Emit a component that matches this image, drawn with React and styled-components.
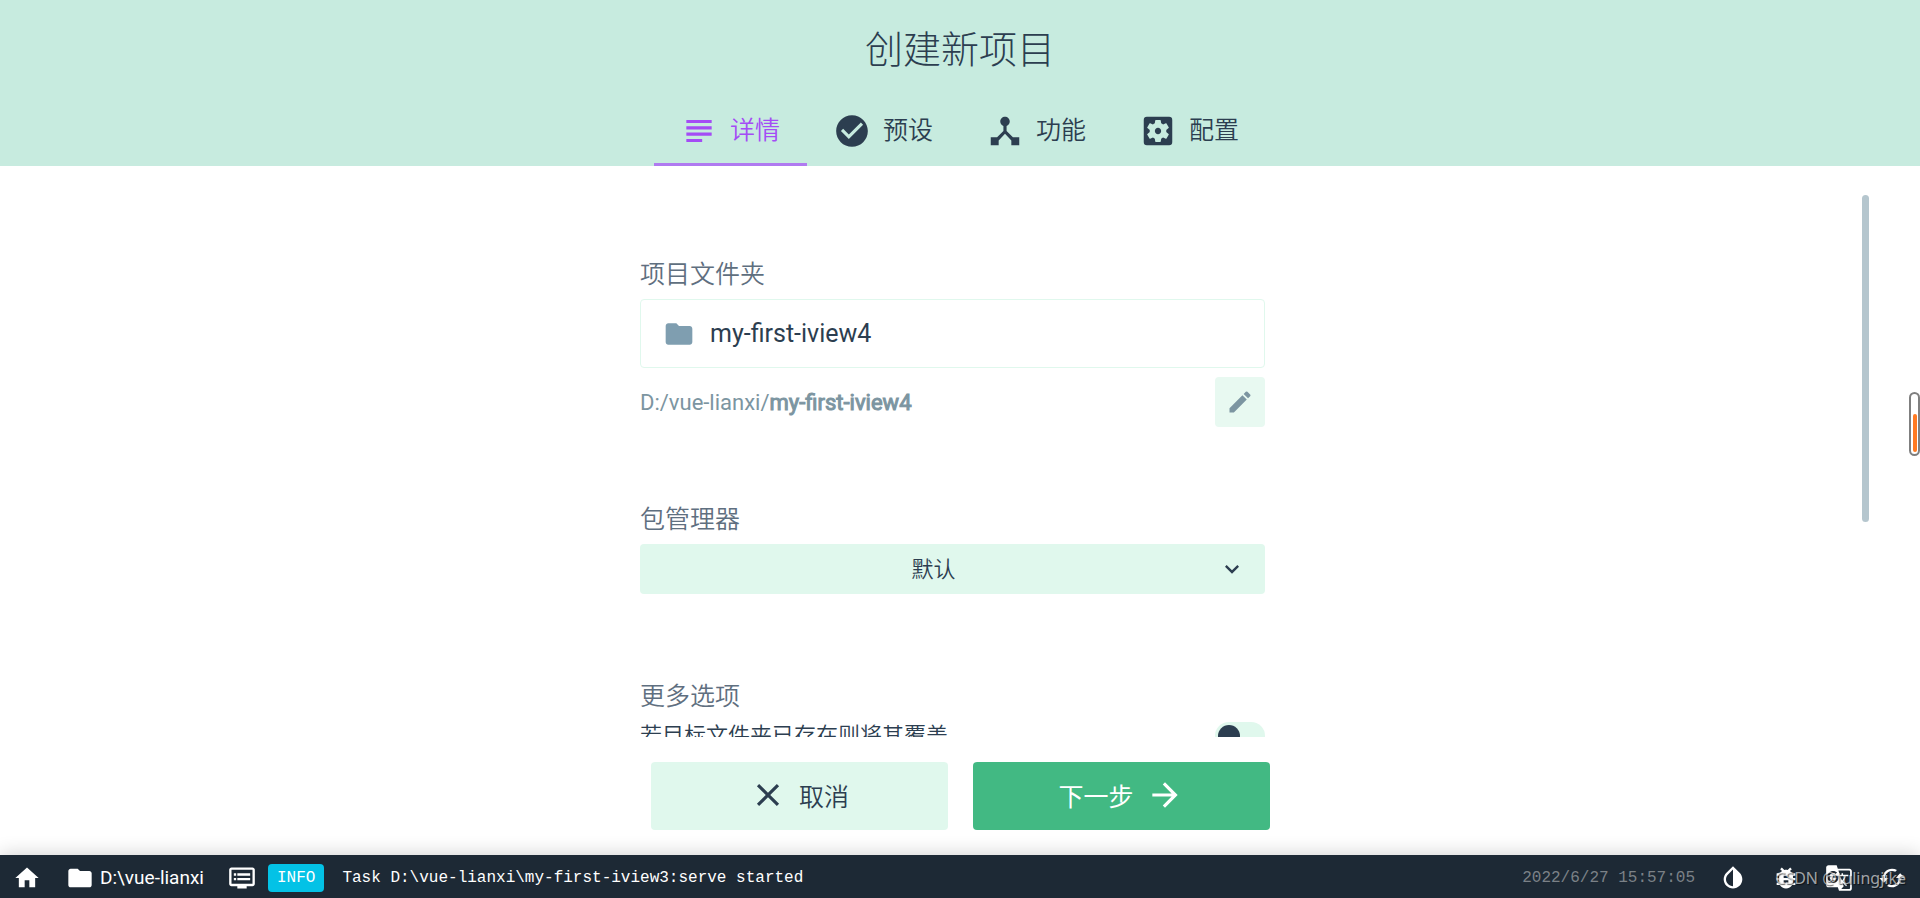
import React, { useState } from 'react';
import styled, { createGlobalStyle, css } from 'styled-components';
import {
  MdSubject,
  MdCheckCircle,
  MdDeviceHub,
  MdSettingsApplications,
  MdFolder,
  MdEdit,
  MdExpandMore,
  MdClose,
  MdArrowForward,
  MdHome,
  MdDvr,
  MdInvertColors,
  MdBugReport,
  MdGTranslate,
  MdCached,
} from 'react-icons/md';

const GlobalStyle = createGlobalStyle`
  *, *::before, *::after {
    box-sizing: border-box;
  }

  body {
    margin: 0;
    background: #fff;
    color: #2c3e50;
    font-family: Roboto, 'Noto Sans CJK SC', sans-serif;
    font-size: 22px;
  }

  button, input, select {
    font-family: inherit;
    color: inherit;
  }
`;

const Page = styled.div`
  position: relative;
  display: flex;
  flex-direction: column;
  height: 100vh;
  overflow: hidden;
`;

const Header = styled.header`
  display: flex;
  flex-direction: column;
  align-items: center;
  background: #c7ebdf;
`;

const Title = styled.h1`
  margin: 0;
  padding-top: 4px;
  line-height: 92px;
  font-size: 38px;
  font-weight: 300;
`;

const Tabs = styled.nav`
  display: flex;
`;

const Tab = styled.button`
  display: flex;
  align-items: center;
  gap: 12px;
  height: 70px;
  padding: 0 27px 0 26px;
  border: 0;
  background: none;
  line-height: 36px;
  font-size: 25px;
  font-weight: 350;
  cursor: pointer;

  svg {
    width: 38px;
    height: 38px;
  }

  ${({ $active }) =>
    $active &&
    css`
      color: #a44cf5;
      box-shadow: inset 0 -3px #b07af0;
    `}
`;

const Main = styled.main`
  position: relative;
  flex: 1;
  min-height: 0;
  overflow: hidden;
  padding: 86px 15px 0 0;
`;

const ScrollThumb = styled.div`
  position: absolute;
  top: 29px;
  right: 51px;
  width: 7px;
  height: 327px;
  border-radius: 4px;
  background: #b5c6ce;
`;

const Form = styled.form`
  display: flex;
  flex-direction: column;
  width: 625px;
  max-width: 100%;
  margin: 0 auto;
`;

const Field = styled.div`
  margin-bottom: ${({ $gap }) => $gap}px;
`;

const Label = styled.label`
  display: block;
  margin-bottom: 2px;
  line-height: 45px;
  font-size: 25px;
  font-weight: 350;
  color: #5f6f80;
`;

const FolderBox = styled.div`
  display: flex;
  align-items: center;
  gap: 15px;
  height: 69px;
  padding: 0 22px;
  border: 1px solid #e0f8ed;
  border-radius: 4px;

  svg {
    width: 32px;
    height: 32px;
    color: #7f9eb0;
  }

  input {
    flex: 1;
    min-width: 0;
    padding: 0;
    border: 0;
    outline: 0;
    background: none;
    font-size: 25px;
  }
`;

const PathRow = styled.div`
  display: flex;
  align-items: center;
  justify-content: space-between;
  margin-top: 9px;
  color: #7c95a1;

  b {
    font-weight: 400;
    -webkit-text-stroke: 1px;
  }
`;

const EditButton = styled.button`
  display: grid;
  place-items: center;
  width: 50px;
  height: 50px;
  border: 0;
  border-radius: 4px;
  background: #e8f9f1;
  cursor: pointer;

  svg {
    width: 28px;
    height: 28px;
    color: #7c95a1;
  }
`;

const SelectBox = styled.div`
  display: grid;
  align-items: center;
  border-radius: 4px;
  background: #e0f8ed;

  select,
  svg {
    grid-area: 1 / 1;
  }

  select {
    appearance: none;
    width: 100%;
    height: 50px;
    padding: 0 38px 0 0;
    border: 0;
    background: none;
    font-size: 22px;
    font-weight: 350;
    text-align: center;
    text-align-last: center;
  }

  svg {
    justify-self: end;
    width: 28px;
    height: 28px;
    margin-right: 19px;
    pointer-events: none;
  }
`;

const SwitchRow = styled.label`
  display: flex;
  align-items: center;
  justify-content: space-between;
  line-height: 30px;
  font-weight: 350;
`;

const Switch = styled.input`
  appearance: none;
  display: flex;
  width: 50px;
  height: 28px;
  margin: 0;
  padding: 3px;
  border-radius: 14px;
  background: #e0f8ed;
  cursor: pointer;

  &::before {
    content: '';
    width: 22px;
    height: 22px;
    border-radius: 50%;
    background: #2c3e50;
  }

  &:checked {
    justify-content: flex-end;
  }
`;

const Actions = styled.div`
  display: flex;
  justify-content: center;
  gap: 25px;
  padding: 25px;
`;

const ActionButton = styled.button`
  display: flex;
  align-items: center;
  justify-content: center;
  gap: 12px;
  width: 297px;
  height: 68px;
  padding: 0 6px 2px;
  border: 0;
  border-radius: 4px;
  background: ${({ $primary }) => ($primary ? '#42b983' : '#e0f8ed')};
  color: ${({ $primary }) => ($primary ? '#fff' : '#2c3e50')};
  font-size: 25px;
  font-weight: ${({ $primary }) => ($primary ? 400 : 350)};
  cursor: pointer;

  svg {
    width: 38px;
    height: 38px;
  }
`;

const StatusBar = styled.footer`
  display: flex;
  align-items: center;
  height: 43px;
  padding: 2px 14px 0 13px;
  background: #1d2935;
  box-shadow: 0 0 20px rgba(0, 0, 0, 0.2);
  color: #fff;
`;

const BarButton = styled.button`
  display: flex;
  align-items: center;
  gap: 6px;
  padding: 0;
  margin-right: ${({ $gap }) => $gap}px;
  border: 0;
  background: none;
  font-size: 19px;
  color: #fff;

  svg {
    width: 28px;
    height: 28px;
  }
`;

const Badge = styled.span`
  padding: 0 9px;
  border-radius: 4px;
  background: #03c2e6;
  line-height: 28px;
`;

const Log = styled.div`
  display: flex;
  align-items: center;
  flex: 1;
  gap: 18px;
  font-family: 'Liberation Mono', monospace;
  font-size: 16px;
  white-space: nowrap;

  time {
    margin-left: auto;
    margin-right: 24px;
    color: #7b8187;
  }
`;

const Watermark = styled.span`
  position: absolute;
  right: 14px;
  bottom: 10px;
  font-family: 'Noto Sans', sans-serif;
  font-size: 16px;
  line-height: 20px;
  color: rgba(255, 255, 255, 0.6);
  text-shadow: 1px 1px 1px rgba(0, 0, 0, 0.6);
  pointer-events: none;
`;

const Meter = styled.div`
  position: absolute;
  top: 392px;
  right: 0;
  display: flex;
  align-items: flex-end;
  justify-content: center;
  width: 11px;
  height: 64px;
  padding-bottom: 2px;
  border: 2px solid #7f7f7f;
  border-radius: 6px;
  background: #fff;

  &::before {
    content: '';
    width: 4px;
    height: 38px;
    border-radius: 2px;
    background: #ff7a22;
  }
`;

const tabs = [
  { id: 'details', label: '详情', Icon: MdSubject },
  { id: 'presets', label: '预设', Icon: MdCheckCircle },
  { id: 'features', label: '功能', Icon: MdDeviceHub },
  { id: 'config', label: '配置', Icon: MdSettingsApplications },
];

const App = () => {
  const [tab, setTab] = useState('details');
  const [folder, setFolder] = useState('my-first-iview4');

  return (
    <Page>
      <GlobalStyle />
      <Header>
        <Title>创建新项目</Title>
        <Tabs>
          {tabs.map(({ id, label, Icon }) => (
            <Tab key={id} type="button" $active={tab === id} onClick={() => setTab(id)}>
              <Icon />
              {label}
            </Tab>
          ))}
        </Tabs>
      </Header>

      <Main>
        <Form>
          <Field $gap={70}>
            <Label htmlFor="folder">项目文件夹</Label>
            <FolderBox>
              <MdFolder />
              <input id="folder" value={folder} onChange={e => setFolder(e.target.value)} />
            </FolderBox>
            <PathRow>
              <span>
                D:/vue-lianxi/<b>{folder}</b>
              </span>
              <EditButton type="button" aria-label="编辑">
                <MdEdit />
              </EditButton>
            </PathRow>
          </Field>

          <Field $gap={80}>
            <Label htmlFor="manager">包管理器</Label>
            <SelectBox>
              <select id="manager">
                <option>默认</option>
              </select>
              <MdExpandMore />
            </SelectBox>
          </Field>

          <Field $gap={0}>
            <Label as="div">更多选项</Label>
            <SwitchRow>
              若目标文件夹已存在则将其覆盖
              <Switch type="checkbox" role="switch" />
            </SwitchRow>
          </Field>
        </Form>
        <ScrollThumb />
      </Main>

      <Actions>
        <ActionButton type="button">
          <MdClose />
          取消
        </ActionButton>
        <ActionButton type="button" $primary>
          下一步
          <MdArrowForward />
        </ActionButton>
      </Actions>

      <StatusBar>
        <BarButton type="button" aria-label="主页" $gap={25}>
          <MdHome />
        </BarButton>
        <BarButton type="button" $gap={24}>
          <MdFolder />
          D:\vue-lianxi
        </BarButton>
        <BarButton type="button" aria-label="日志" $gap={12}>
          <MdDvr />
        </BarButton>
        <Log>
          <Badge>INFO</Badge>
          <span>Task D:\vue-lianxi\my-first-iview3:serve started</span>
          <time>2022/6/27 15:57:05</time>
        </Log>
        <BarButton type="button" aria-label="主题" $gap={25}>
          <MdInvertColors />
        </BarButton>
        <BarButton type="button" aria-label="报告问题" $gap={25}>
          <MdBugReport />
        </BarButton>
        <BarButton type="button" aria-label="语言" $gap={25}>
          <MdGTranslate />
        </BarButton>
        <BarButton type="button" aria-label="刷新" $gap={0}>
          <MdCached />
        </BarButton>
      </StatusBar>
      <Watermark>CSDN @tulingjike</Watermark>
      <Meter />
    </Page>
  );
};

export default App;
